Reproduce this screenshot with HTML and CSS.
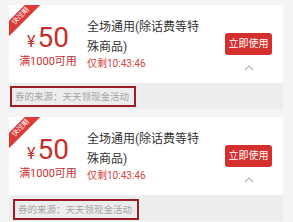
FILE: index.html
```html
<!DOCTYPE html>
<html lang="zh">
<head>
<meta charset="utf-8">
<link rel="stylesheet" href="styles.css">
</head>
<body>
<div class="list">
  <div class="coupon">
    <div class="coupon-main">
      <div class="ribbon-clip"><div class="ribbon">快过期</div></div>
      <div class="price-col">
        <div class="price"><span class="yen">¥</span><span class="amount">50</span></div>
        <div class="cond">满1000可用</div>
      </div>
      <div class="info-col">
        <div class="title">全场通用(除话费等特殊商品)</div>
        <div class="timer">仅剩10:43:46</div>
      </div>
      <div class="action-col">
        <div class="btn">立即使用</div>
        <svg class="chev" width="10" height="6" viewBox="0 0 10 6"><polyline points="1,5 5,1 9,5" fill="none" stroke="#b5b5b5" stroke-width="1.1"/></svg>
      </div>
    </div>
    <div class="coupon-source"><div class="source-box">券的来源：天天领现金活动</div></div>
  </div>
  <div class="coupon">
    <div class="coupon-main">
      <div class="ribbon-clip"><div class="ribbon">快过期</div></div>
      <div class="price-col">
        <div class="price"><span class="yen">¥</span><span class="amount">50</span></div>
        <div class="cond">满1000可用</div>
      </div>
      <div class="info-col">
        <div class="title">全场通用(除话费等特殊商品)</div>
        <div class="timer">仅剩10:43:46</div>
      </div>
      <div class="action-col">
        <div class="btn">立即使用</div>
        <svg class="chev" width="10" height="6" viewBox="0 0 10 6"><polyline points="1,5 5,1 9,5" fill="none" stroke="#b5b5b5" stroke-width="1.1"/></svg>
      </div>
    </div>
    <div class="coupon-source second"><div class="source-box">券的来源：天天领现金活动</div></div>
  </div>
</div>
</body>
</html>
```
FILE: styles.css
```css
html, body {
  margin: 0;
  padding: 0;
  background: #f5f5f5;
  font-family: Roboto, "Noto Sans CJK SC", sans-serif;
}
.list {
  display: flex;
  flex-direction: column;
  gap: 8px;
  padding: 5px 10px 0 9px;
}
.coupon {
  width: 274px;
}
.coupon-main {
  position: relative;
  height: 78px;
  background: #ffffff;
  display: flex;
}
.ribbon-clip {
  position: absolute;
  left: 0;
  top: 0;
  width: 36px;
  height: 36px;
  overflow: hidden;
}
.ribbon {
  position: absolute;
  left: -14.5px;
  top: 6px;
  width: 52px;
  height: 11px;
  background: #dc3a36;
  color: #fff;
  font-size: 7px;
  line-height: 11px;
  text-align: center;
  transform: rotate(-45deg);
}
.price-col {
  width: 78px;
  display: flex;
  flex-direction: column;
  align-items: center;
  padding-top: 17px;
  color: #c8302d;
}
.price {
  line-height: 32px;
  height: 32px;
  white-space: nowrap;
}
.yen {
  font-size: 16px;
  margin-right: 2px;
}
.amount {
  font-family: Roboto, sans-serif;
  font-size: 28px;
}
.cond {
  font-size: 11px;
  line-height: 14px;
  margin-top: 1px;
  white-space: nowrap;
}
.info-col {
  flex: 1;
  padding-top: 12px;
}
.title {
  font-size: 12px;
  line-height: 20px;
  color: #333;
  width: 116px;
}
.timer {
  font-size: 10px;
  line-height: 14px;
  color: #d2443e;
}
.action-col {
  width: 47px;
  margin-right: 11px;
  padding-top: 28px;
  display: flex;
  flex-direction: column;
  align-items: center;
}
.btn {
  width: 47px;
  height: 22px;
  background: #d52f2d;
  border-radius: 3px;
  color: #fff;
  font-size: 10px;
  line-height: 22px;
  text-align: center;
}
.chev {
  display: block;
  margin-top: 10px;
}
.coupon-source {
  height: 26px;
  background: #ededed;
  padding: 3px 0 0 1px;
  box-sizing: border-box;
}
.coupon-source.second {
  padding: 4px 0 0 4px;
}
.source-box {
  width: 126px;
  height: 21px;
  box-sizing: border-box;
  border: 2px solid #9b1e24;
  font-size: 9.5px;
  line-height: 17px;
  color: #a5a5a5;
  padding-left: 3px;
  white-space: nowrap;
}
```
